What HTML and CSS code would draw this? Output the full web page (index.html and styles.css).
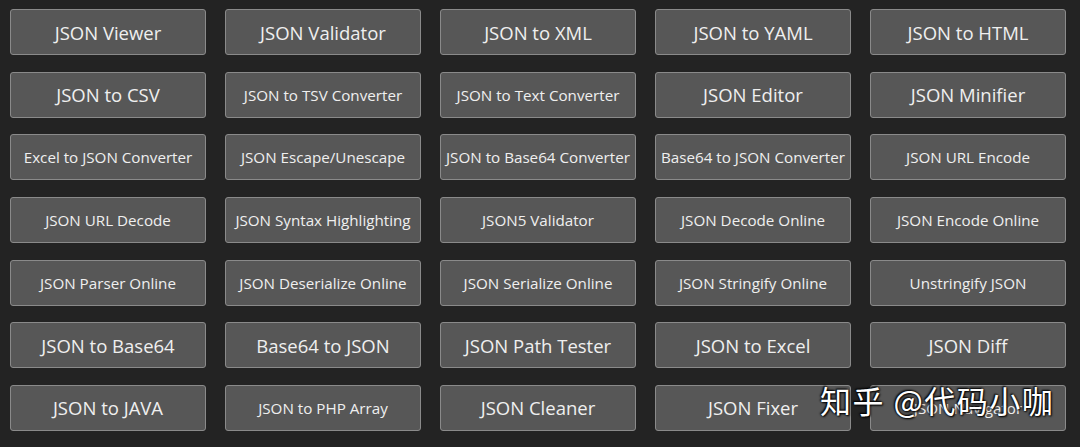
FILE: index.html
```html
<!DOCTYPE html>
<html lang="zh">
<head>
<meta charset="utf-8">
<link rel="stylesheet" href="styles.css">
</head>
<body>
<div class="page">
  <div class="grid">
    <a class="btn big">JSON Viewer</a>
    <a class="btn big">JSON Validator</a>
    <a class="btn big">JSON to XML</a>
    <a class="btn big">JSON to YAML</a>
    <a class="btn big">JSON to HTML</a>

    <a class="btn big">JSON to CSV</a>
    <a class="btn">JSON to TSV Converter</a>
    <a class="btn">JSON to Text Converter</a>
    <a class="btn big">JSON Editor</a>
    <a class="btn big">JSON Minifier</a>

    <a class="btn">Excel to JSON Converter</a>
    <a class="btn">JSON Escape/Unescape</a>
    <a class="btn">JSON to Base64 Converter</a>
    <a class="btn">Base64 to JSON Converter</a>
    <a class="btn">JSON URL Encode</a>

    <a class="btn">JSON URL Decode</a>
    <a class="btn">JSON Syntax Highlighting</a>
    <a class="btn">JSON5 Validator</a>
    <a class="btn">JSON Decode Online</a>
    <a class="btn">JSON Encode Online</a>

    <a class="btn">JSON Parser Online</a>
    <a class="btn">JSON Deserialize Online</a>
    <a class="btn">JSON Serialize Online</a>
    <a class="btn">JSON Stringify Online</a>
    <a class="btn">Unstringify JSON</a>

    <a class="btn big">JSON to Base64</a>
    <a class="btn big">Base64 to JSON</a>
    <a class="btn big">JSON Path Tester</a>
    <a class="btn big">JSON to Excel</a>
    <a class="btn big">JSON Diff</a>

    <a class="btn big">JSON to JAVA</a>
    <a class="btn">JSON to PHP Array</a>
    <a class="btn big">JSON Cleaner</a>
    <a class="btn big">JSON Fixer</a>
    <a class="btn">JSON Navigator</a>
  </div>
  <div class="watermark">知乎 @代码小咖</div>
</div>
</body>
</html>
```
FILE: styles.css
```css
html, body {
  margin: 0;
  padding: 0;
  background: #232323;
}
body {
  width: 1080px;
  height: 447px;
  overflow: hidden;
  font-family: "Open Sans", "Noto Sans", sans-serif;
}
.page {
  position: relative;
  width: 1080px;
  height: 447px;
}
.grid {
  display: grid;
  grid-template-columns: repeat(5, 196px);
  grid-auto-rows: 46px;
  column-gap: 19px;
  row-gap: 16.67px;
  padding: 9px 0 0 10px;
}
.btn {
  box-sizing: border-box;
  display: flex;
  align-items: center;
  justify-content: center;
  background: #575757;
  border: 1px solid #8a8a8a;
  border-radius: 3px;
  color: #efefef;
  font-size: 15.2px;
  white-space: nowrap;
}
.btn.big {
  font-size: 18.5px;
}
.watermark {
  position: absolute;
  left: 820px;
  top: 377px;
  font-family: "Noto Sans CJK SC", sans-serif;
  font-size: 31px;
  color: #ffffff;
  letter-spacing: 1.5px;
  text-shadow: 0 0 2px #000, 1px 1px 2px #000, -1px -1px 2px #000;
  white-space: nowrap;
}
```
